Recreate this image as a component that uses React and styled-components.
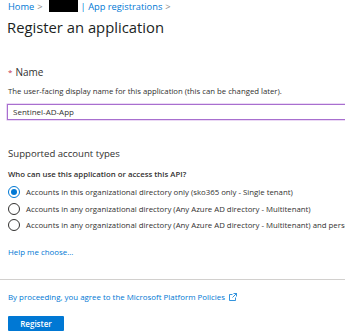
import React from "react";
import styled, { createGlobalStyle } from "styled-components";

const GlobalStyle = createGlobalStyle`
  html, body {
    margin: 0;
    padding: 0;
    background: #ffffff;
    overflow: hidden;
  }
  body {
    font-family: "Open Sans", "Noto Sans", sans-serif;
    color: #323130;
  }
`;

const Page = styled.div`
  width: 345px;
  height: 335px;
  overflow: hidden;
  display: flex;
  flex-direction: column;
`;

const Section = styled.div`
  padding: 0 0 0 8px;
  display: flex;
  flex-direction: column;
`;

const Breadcrumb = styled.div`
  display: flex;
  align-items: center;
  height: 12px;
  font-size: 9.3px;
  color: #0078d4;
  white-space: nowrap;
`;

const Chevron = styled.span`
  color: #8a8886;
  margin: 0 6px 0 3px;
`;

const Redacted = styled.span`
  display: inline-block;
  width: 29px;
  height: 12px;
  background: #000;
  margin-right: 3px;
`;

const Title = styled.h1`
  margin: 5px 0 0 -1px;
  font-size: 14.8px;
  font-weight: 400;
  line-height: 20px;
  color: #201f1e;
`;

const Label = styled.div`
  margin-top: 28px;
  font-size: 10px;
  line-height: 14px;
  color: #323130;
`;

const Required = styled.span`
  color: #c4314b;
  font-size: 8px;
  margin-right: 3px;
  vertical-align: 1px;
`;

const Hint = styled.div`
  margin-top: 6px;
  font-size: 7.75px;
  line-height: 12px;
  color: #323130;
  white-space: nowrap;
`;

const TextInput = styled.div`
  margin-top: 7px;
  margin-left: -1px;
  height: 14px;
  width: 360px;
  border: 1px solid #a86fcf;
  box-shadow: 0 0 0 0.5px #d6b3ea;
  font-size: 8px;
  line-height: 14px;
  padding-left: 5px;
  color: #323130;
`;

const Heading = styled.div`
  margin-top: 27px;
  font-size: 9.6px;
  line-height: 14px;
  color: #323130;
`;

const Question = styled.div`
  margin-top: 7px;
  font-size: 7.8px;
  font-weight: 600;
  line-height: 12px;
  color: #323130;
  white-space: nowrap;
`;

const RadioList = styled.div`
  margin-top: 6px;
  display: flex;
  flex-direction: column;
  gap: 4.5px;
`;

const RadioRow = styled.div`
  display: flex;
  align-items: center;
  height: 12px;
  white-space: nowrap;
  font-size: 7.8px;
  color: #323130;
`;

const RadioCircle = styled.span`
  flex: none;
  width: 10px;
  height: 10px;
  border-radius: 50%;
  border: 1px solid ${({ $checked }) => ($checked ? "#0078d4" : "#323130")};
  margin-right: 6px;
  display: flex;
  align-items: center;
  justify-content: center;
  &::after {
    content: "";
    width: 6px;
    height: 6px;
    border-radius: 50%;
    background: ${({ $checked }) => ($checked ? "#0078d4" : "transparent")};
  }
`;

const Link = styled.div`
  font-size: 7.9px;
  line-height: 12px;
  color: #0078d4;
  white-space: nowrap;
  display: flex;
  align-items: center;
  gap: 4px;
`;

const HelpLink = styled(Link)`
  margin-top: 15px;
`;

const Divider = styled.div`
  margin-top: 21px;
  height: 1px;
  background: #d2d0ce;
`;

const Footer = styled(Section)`
  padding-top: 11px;
`;

const Button = styled.button`
  margin-top: 13px;
  width: 56px;
  height: 15px;
  border: none;
  border-radius: 1px;
  background: #0078d4;
  color: #ffffff;
  font-family: inherit;
  font-size: 8px;
  font-weight: 600;
  padding: 0;
  line-height: 15px;
`;

const ExternalIcon = () => (
  <svg width="8" height="8" viewBox="0 0 8 8" fill="none" stroke="#0078d4" strokeWidth="0.8">
    <path d="M3.5 1.5H0.5V7.5H6.5V4.5" />
    <path d="M4.5 0.5H7.5V3.5" />
    <path d="M7.5 0.5L3.5 4.5" />
  </svg>
);

const options = [
  { text: "Accounts in this organizational directory only (sko365 only - Single tenant)", checked: true },
  { text: "Accounts in any organizational directory (Any Azure AD directory - Multitenant)" },
  { text: "Accounts in any organizational directory (Any Azure AD directory - Multitenant) and personal Microsoft accounts (e.g. Skype, Xbox)" },
];

export default function App() {
  return (
    <Page>
      <GlobalStyle />
      <Section>
        <Breadcrumb>
          Home<Chevron>&gt;</Chevron>
          <Redacted />| App registrations<Chevron>&gt;</Chevron>
        </Breadcrumb>
        <Title>Register an application</Title>
        <Label>
          <Required>*</Required>Name
        </Label>
        <Hint>The user-facing display name for this application (this can be changed later).</Hint>
        <TextInput>Sentinel-AD-App</TextInput>
        <Heading>Supported account types</Heading>
        <Question>Who can use this application or access this API?</Question>
        <RadioList>
          {options.map((o) => (
            <RadioRow key={o.text}>
              <RadioCircle $checked={o.checked} />
              {o.text}
            </RadioRow>
          ))}
        </RadioList>
        <HelpLink>Help me choose...</HelpLink>
      </Section>
      <Divider />
      <Footer>
        <Link>
          By proceeding, you agree to the Microsoft Platform Policies
          <ExternalIcon />
        </Link>
        <Button>Register</Button>
      </Footer>
    </Page>
  );
}
